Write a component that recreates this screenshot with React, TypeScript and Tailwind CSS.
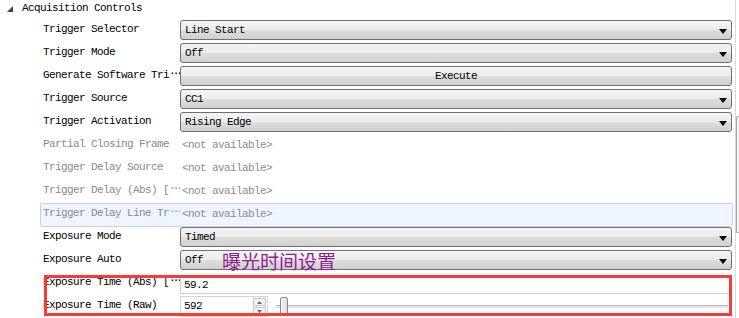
import React from 'react';

const mono = "font-['Liberation_Mono','DejaVu_Sans_Mono',monospace] text-[11px] tracking-[-0.6px]";

type Row =
  | { label: string; kind: 'combo'; value: string; note?: boolean }
  | { label: string; kind: 'button'; value: string }
  | { label: string; kind: 'na'; highlight?: boolean }
  | { label: string; kind: 'text'; value: string }
  | { label: string; kind: 'spin'; value: string };

const rows: Row[] = [
  { label: 'Trigger Selector', kind: 'combo', value: 'Line Start' },
  { label: 'Trigger Mode', kind: 'combo', value: 'Off' },
  { label: 'Generate Software Tri|', kind: 'button', value: 'Execute' },
  { label: 'Trigger Source', kind: 'combo', value: 'CC1' },
  { label: 'Trigger Activation', kind: 'combo', value: 'Rising Edge' },
  { label: 'Partial Closing Frame', kind: 'na' },
  { label: 'Trigger Delay Source', kind: 'na' },
  { label: 'Trigger Delay (Abs) [|', kind: 'na' },
  { label: 'Trigger Delay Line Tr|', kind: 'na', highlight: true },
  { label: 'Exposure Mode', kind: 'combo', value: 'Timed' },
  { label: 'Exposure Auto', kind: 'combo', value: 'Off', note: true },
  { label: 'Exposure Time (Abs) [|', kind: 'text', value: '59.2' },
  { label: 'Exposure Time (Raw)', kind: 'spin', value: '592' },
];

const btnBg =
  'bg-[linear-gradient(to_bottom,#f4f4f4_0%,#ececec_50%,#dedede_50%,#d0d0d0_100%)] border border-[#707070] rounded-[3px]';

// labels cut short end with a raised three-dot ellipsis
function Label({ text }: { text: string }) {
  if (!text.endsWith('|')) return <>{text}</>;
  return (
    <>
      {text.slice(0, -1)}
      <span className="tracking-[-3px] relative -top-[2px]">···</span>
    </>
  );
}

function Arrow() {
  return (
    <svg width="8" height="5" viewBox="0 0 8 5" className="absolute right-[4px] top-[8px]">
      <polygon points="0,0 8,0 4,5" fill="#000" />
    </svg>
  );
}

function Value({ row }: { row: Row }) {
  if (row.kind === 'combo') {
    return (
      <div className={`relative h-[20px] w-[552px] ${btnBg} flex items-center pl-[4px]`}>
        <span className="text-black">{row.value}</span>
        <Arrow />
        {row.note && (
          <span className="absolute left-[41px] top-[0px] text-[19px] leading-[20px] tracking-normal text-[#921c92] font-['Noto_Sans_CJK_SC',sans-serif]">
            曝光时间设置
          </span>
        )}
      </div>
    );
  }
  if (row.kind === 'button') {
    return (
      <div className={`h-[20px] w-[552px] ${btnBg} flex items-center justify-center`}>
        <span className="text-black">{row.value}</span>
      </div>
    );
  }
  if (row.kind === 'na') {
    return <div className="h-[20px] flex items-center pl-[2px] text-[#8c8c8c]">&lt;not available&gt;</div>;
  }
  if (row.kind === 'text') {
    return (
      <div className="mt-[3px] h-[18px] w-[552px] border border-[#c5d8e6] bg-white flex items-center pl-[3px] text-black">
        {row.value}
      </div>
    );
  }
  return (
    <div className="flex items-center h-[21px]">
      <div className="h-[21px] w-[88px] border border-[#d4d4d4] bg-white flex items-center justify-between pl-[3px] pr-[1px]">
        <span className="text-black">{row.value}</span>
        <div className="flex flex-col gap-[1px]">
          <div className="w-[13px] h-[8px] border border-[#c8c8c8] bg-[#f0f0f0] flex items-center justify-center">
            <svg width="5" height="3" viewBox="0 0 5 3"><polygon points="0,3 5,3 2.5,0" fill="#5a6e8c" /></svg>
          </div>
          <div className="w-[13px] h-[8px] border border-[#c8c8c8] bg-[#f0f0f0] flex items-center justify-center">
            <svg width="5" height="3" viewBox="0 0 5 3"><polygon points="0,0 5,0 2.5,3" fill="#5a6e8c" /></svg>
          </div>
        </div>
      </div>
      <div className="relative ml-[8px] w-[452px] h-[21px] flex items-center">
        <div className="w-full h-[3px] border-t border-[#b8b8b8] bg-[#e6e6e6]" />
        <div className="absolute left-[4px] top-[1px] w-[8px] h-[18px] rounded-[2px] border border-[#8a8a8a] bg-[linear-gradient(to_right,#f6f6f6,#dcdcdc)]" />
      </div>
    </div>
  );
}

export default function App() {
  return (
    <div className={`relative w-[739px] h-[318px] bg-white overflow-hidden ${mono}`}>
      <div className="h-[20px] flex items-start pt-[1px]">
        <svg width="6" height="6" viewBox="0 0 6 6" className="ml-[7px] mt-[5px]">
          <polygon points="6,0 6,6 0,6" fill="#444" />
        </svg>
        <span className="ml-[9px] leading-[14px] text-black">Acquisition Controls</span>
      </div>
      {rows.map((row) => {
        const gray = row.kind === 'na';
        const hl = row.kind === 'na' && row.highlight;
        return (
          <div
            key={row.label}
            className={`ml-[40px] w-[693px] h-[23px] flex items-start ${
              hl ? 'bg-[#eef5fe] border border-[#bcd5f4] rounded-[2px] -mt-[1px] h-[24px]' : ''
            }`}
          >
            <div
              className={`${hl ? 'w-[139px] pl-[2px]' : 'w-[140px] pl-[3px]'} h-[20px] pt-[1px] leading-[16px] whitespace-nowrap overflow-hidden ${
                gray ? 'text-[#8a8a8a]' : 'text-black'
              }`}
            >
              <Label text={row.label} />
            </div>
            <Value row={row} />
          </div>
        );
      })}
      <div className="absolute left-[44px] top-[275px] w-[688px] h-[41px] border-[3px] border-[#f83a3a]" />
      <div className="absolute right-0 top-0 w-[4px] h-[318px] border-l border-[#d9d9d9] bg-white" />
      <div className="absolute right-0 top-[116px] w-[3px] h-[117px] border-l border-t border-b border-[#a8a8a8] rounded-l-[2px] bg-[#f0f0f0]" />
    </div>
  );
}
